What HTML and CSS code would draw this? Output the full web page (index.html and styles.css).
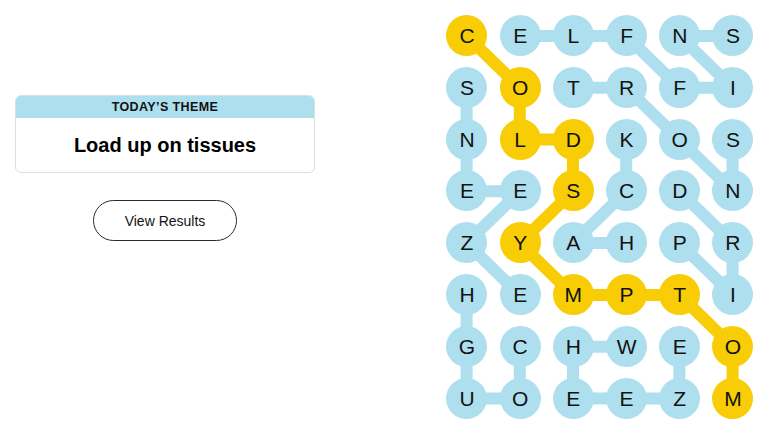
FILE: index.html
```html
<!DOCTYPE html>
<html lang="en">
<head>
<meta charset="utf-8">
<title>Strands</title>
<link rel="stylesheet" href="styles.css">
</head>
<body>
<main class="page">
  <section class="left">
    <div class="theme-card">
      <div class="theme-head">TODAY’S THEME</div>
      <div class="theme-body">Load up on tissues</div>
    </div>
    <button class="results-btn" type="button">View Results</button>
  </section>
  <section class="board">
    <svg class="links" viewBox="0 0 319.2 414.4" width="319.2" height="414.4" aria-hidden="true">
      <g class="blue" fill="none" stroke-linecap="round" stroke-linejoin="round">
        <polyline points="292.6,25.9 239.4,25.9 292.6,77.7 239.4,77.7 186.2,25.9 133,25.9 79.8,25.9"/>
        <polyline points="292.6,129.5 292.6,181.3 239.4,129.5 186.2,77.7 133,77.7"/>
        <polyline points="26.6,77.7 26.6,129.5 26.6,181.3 79.8,181.3 26.6,233.1 79.8,284.9"/>
        <polyline points="186.2,129.5 186.2,181.3 133,233.1 186.2,233.1"/>
        <polyline points="239.4,181.3 292.6,233.1 292.6,284.9 239.4,233.1"/>
        <polyline points="79.8,336.7 79.8,388.5 26.6,388.5 26.6,336.7 26.6,284.9"/>
        <polyline points="186.2,336.7 133,336.7 133,388.5 186.2,388.5 239.4,388.5 239.4,336.7"/>
      </g>
      <g class="gold" fill="none" stroke-linecap="round" stroke-linejoin="round">
        <polyline points="26.6,25.9 79.8,77.7 79.8,129.5 133,129.5 133,181.3 79.8,233.1 133,284.9 186.2,284.9 239.4,284.9 292.6,336.7 292.6,388.5"/>
      </g>
    </svg>
    <div class="cell"><span class="dot gold-dot">C</span></div>
    <div class="cell"><span class="dot">E</span></div>
    <div class="cell"><span class="dot">L</span></div>
    <div class="cell"><span class="dot">F</span></div>
    <div class="cell"><span class="dot">N</span></div>
    <div class="cell"><span class="dot">S</span></div>

    <div class="cell"><span class="dot">S</span></div>
    <div class="cell"><span class="dot gold-dot">O</span></div>
    <div class="cell"><span class="dot">T</span></div>
    <div class="cell"><span class="dot">R</span></div>
    <div class="cell"><span class="dot">F</span></div>
    <div class="cell"><span class="dot">I</span></div>

    <div class="cell"><span class="dot">N</span></div>
    <div class="cell"><span class="dot gold-dot">L</span></div>
    <div class="cell"><span class="dot gold-dot">D</span></div>
    <div class="cell"><span class="dot">K</span></div>
    <div class="cell"><span class="dot">O</span></div>
    <div class="cell"><span class="dot">S</span></div>

    <div class="cell"><span class="dot">E</span></div>
    <div class="cell"><span class="dot">E</span></div>
    <div class="cell"><span class="dot gold-dot">S</span></div>
    <div class="cell"><span class="dot">C</span></div>
    <div class="cell"><span class="dot">D</span></div>
    <div class="cell"><span class="dot">N</span></div>

    <div class="cell"><span class="dot">Z</span></div>
    <div class="cell"><span class="dot gold-dot">Y</span></div>
    <div class="cell"><span class="dot">A</span></div>
    <div class="cell"><span class="dot">H</span></div>
    <div class="cell"><span class="dot">P</span></div>
    <div class="cell"><span class="dot">R</span></div>

    <div class="cell"><span class="dot">H</span></div>
    <div class="cell"><span class="dot">E</span></div>
    <div class="cell"><span class="dot gold-dot">M</span></div>
    <div class="cell"><span class="dot gold-dot">P</span></div>
    <div class="cell"><span class="dot gold-dot">T</span></div>
    <div class="cell"><span class="dot">I</span></div>

    <div class="cell"><span class="dot">G</span></div>
    <div class="cell"><span class="dot">C</span></div>
    <div class="cell"><span class="dot">H</span></div>
    <div class="cell"><span class="dot">W</span></div>
    <div class="cell"><span class="dot">E</span></div>
    <div class="cell"><span class="dot gold-dot">O</span></div>

    <div class="cell"><span class="dot">U</span></div>
    <div class="cell"><span class="dot">O</span></div>
    <div class="cell"><span class="dot">E</span></div>
    <div class="cell"><span class="dot">E</span></div>
    <div class="cell"><span class="dot">Z</span></div>
    <div class="cell"><span class="dot gold-dot">M</span></div>
  </section>
</main>
</body>
</html>
```
FILE: styles.css
```css
* { box-sizing: border-box; }
html, body {
  margin: 0;
  padding: 0;
  background: #ffffff;
}
body {
  font-family: "Liberation Sans", Arial, sans-serif;
  color: #121212;
  width: 768px;
  height: 432px;
  overflow: hidden;
}
.page {
  display: flex;
  align-items: flex-start;
  height: 432px;
}
.left {
  width: 300px;
  margin-left: 15px;
  padding-top: 95px;
  display: flex;
  flex-direction: column;
  align-items: center;
}
.theme-card {
  width: 300px;
  border: 1px solid #dedede;
  border-radius: 6px;
  overflow: hidden;
}
.theme-head {
  background: #aedfee;
  height: 22px;
  line-height: 22px;
  text-align: center;
  font-size: 12.5px;
  font-weight: 700;
  letter-spacing: 0.4px;
  color: #121212;
}
.theme-body {
  height: 54px;
  display: flex;
  align-items: center;
  justify-content: center;
  font-size: 20px;
  font-weight: 700;
  color: #000;
}
.results-btn {
  margin-top: 27px;
  width: 144px;
  height: 41px;
  border: 1px solid #2a2a2a;
  border-radius: 21px;
  background: #fff;
  font-family: "Liberation Sans", Arial, sans-serif;
  font-size: 14px;
  color: #121212;
  padding: 0;
}
.board {
  position: relative;
  margin-left: 125.4px;
  margin-top: 9.6px;
  display: grid;
  grid-template-columns: repeat(6, 53.2px);
  grid-template-rows: repeat(8, 51.8px);
}
.links {
  position: absolute;
  left: 0;
  top: 0;
  z-index: 0;
}
.links .blue { stroke: #aedfee; stroke-width: 12; }
.links .gold { stroke: #f8cd05; stroke-width: 12; }
.cell {
  position: relative;
  z-index: 1;
  display: flex;
  align-items: center;
  justify-content: center;
}
.dot {
  width: 41px;
  height: 41px;
  border-radius: 50%;
  background: #aedfee;
  display: flex;
  align-items: center;
  justify-content: center;
  font-size: 21px;
  color: #121212;
  line-height: 1;
}
.gold-dot { background: #f8cd05; }
```
